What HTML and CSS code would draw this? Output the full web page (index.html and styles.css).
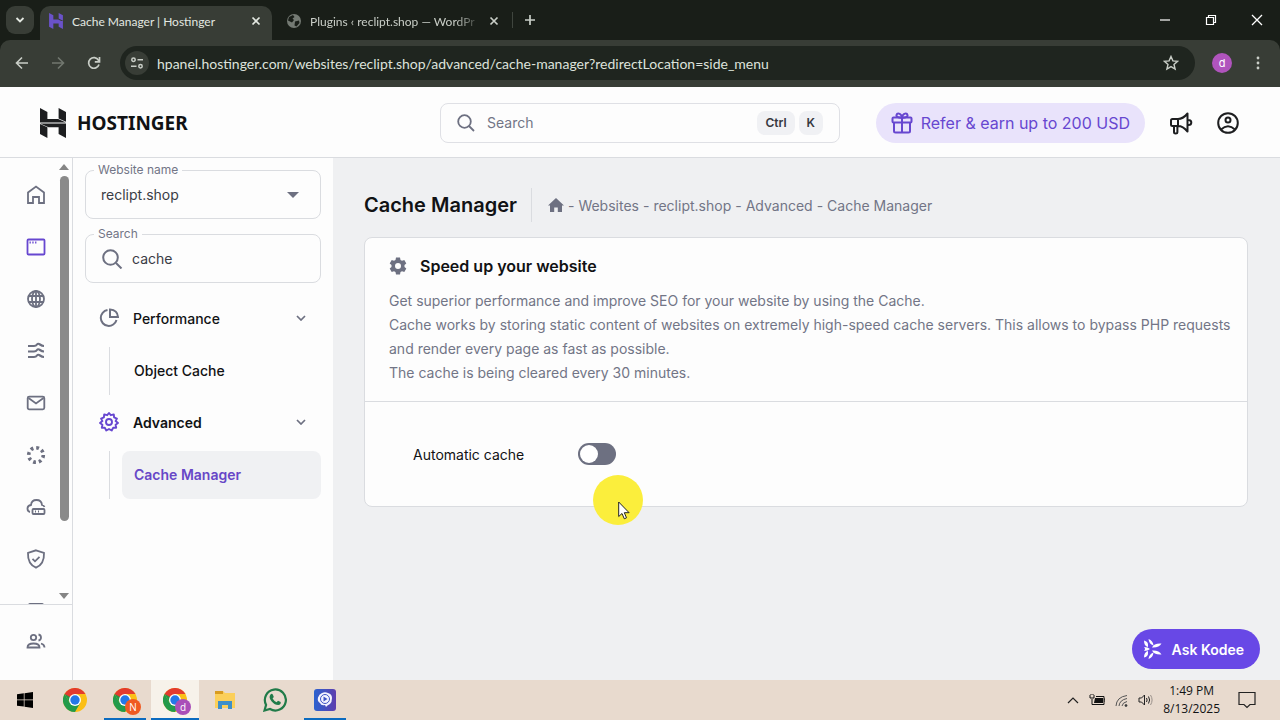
FILE: index.html
```html
<!DOCTYPE html>
<html lang="en">
<head>
  <meta charset="UTF-8" />
  <meta name="viewport" content="width=device-width, initial-scale=1.0" />
  <title>Cache Manager | Hostinger</title>
  <link rel="stylesheet" href="styles.css">
</head>
<body>
  <!-- browser -->
  <div class="tabstrip">
    <button type="button" class="tab-list" aria-label="Search tabs">
      <svg width="10" height="6" viewBox="0 0 10 6"><path d="M1.500 1L5 4.500L8.500 1" fill="none" stroke="#e3e8e1" stroke-width="1.800"/></svg>
    </button>
    <div class="tab active">
      <svg width="16" height="16" viewBox="0 0 26 30" fill="#6a52c8"><path d="M0 0l8 4v8h9l9 4.500H0zM18 0l8 4v10.500l-8-4.200zM0 15h26v15l-8-4v-6.500H8V30l-8-4z"/></svg>
      <span class="tab-title">Cache Manager | Hostinger</span>
      <button type="button" aria-label="Close tab"><svg width="10" height="10" viewBox="0 0 10 10"><path d="M1.500 1.500l7 7M8.500 1.500l-7 7" stroke="#e3e8e1" stroke-width="1.700"/></svg></button>
    </div>
    <div class="tab">
      <svg width="16" height="16" viewBox="0 0 16 16"><circle cx="8" cy="8" r="7" fill="#747a73"/><path d="M3 4l4-2 1.500 2-2 1.500L8 7 6 9.500 2 7.500zM9 8.500l4-1 .5 2.500-3 3.500-2-1z" fill="#191e18"/></svg>
      <span class="tab-title fade">Plugins ‹ reclipt.shop — WordPr</span>
      <button type="button" aria-label="Close tab"><svg width="10" height="10" viewBox="0 0 10 10"><path d="M1.500 1.500l7 7M8.500 1.500l-7 7" stroke="#c9cec7" stroke-width="1.700"/></svg></button>
    </div>
    <button type="button" class="new-tab" aria-label="New tab"><svg width="12" height="12" viewBox="0 0 12 12"><path d="M6 1v10M1 6h10" stroke="#c9cec7" stroke-width="1.700"/></svg></button>
    <div class="window-buttons">
      <button type="button" aria-label="Minimize"><svg width="12" height="12" viewBox="0 0 12 12"><path d="M1 6h10" stroke="#fff" stroke-width="1.200"/></svg></button>
      <button type="button" aria-label="Restore"><svg width="12" height="12" viewBox="0 0 12 12" fill="none" stroke="#fff" stroke-width="1.200"><path d="M1.500 3.500h7v7h-7z"/><path d="M3.500 3.500v-2h7v7h-2"/></svg></button>
      <button type="button" aria-label="Close"><svg width="12" height="12" viewBox="0 0 12 12"><path d="M1 1l10 10M11 1L1 11" stroke="#fff" stroke-width="1.300"/></svg></button>
    </div>
  </div>

  <div class="toolbar-back">
    <div class="toolbar">
      <button type="button" aria-label="Back"><svg width="14" height="14" viewBox="0 0 14 14" fill="none" stroke="#c9cec7" stroke-width="1.600"><path d="M13 7H2M7 1.500L1.500 7 7 12.500"/></svg></button>
      <button type="button" aria-label="Forward" disabled><svg width="14" height="14" viewBox="0 0 14 14" fill="none" stroke="#71776f" stroke-width="1.600"><path d="M1 7h11M7 1.500L12.500 7 7 12.500"/></svg></button>
      <button type="button" aria-label="Reload"><svg width="14" height="14" viewBox="0 0 14 14" fill="none" stroke="#c9cec7" stroke-width="1.700"><path d="M12 8.500A5.300 5.300 0 1 1 11.500 4.200L12.500 5.500"/><path d="M12.500 1v4.800H7.800"/></svg></button>
      <div class="url-bar">
        <span class="site-info"><svg width="14" height="14" viewBox="0 0 14 14" fill="none" stroke="#c9cec7" stroke-width="1.500"><circle cx="3.500" cy="3.700" r="1.700"/><path d="M7.500 3.700H13M1 10.300h5.500"/><circle cx="10.500" cy="10.300" r="1.700"/></svg></span>
        <input type="text" aria-label="Address" value="hpanel.hostinger.com/websites/reclipt.shop/advanced/cache-manager?redirectLocation=side_menu">
        <svg width="16" height="16" viewBox="0 0 16 16"><path d="M8 1.500l1.900 4.400 4.700.4-3.600 3.100 1.100 4.700L8 11.600l-4.100 2.500L5 9.400 1.400 6.300l4.700-.4z" fill="none" stroke="#c9cec7" stroke-width="1.400"/></svg>
      </div>
      <span class="profile">d</span>
      <button type="button" aria-label="Menu"><svg width="4" height="16" viewBox="0 0 4 16" fill="#c9cec7"><circle cx="2" cy="3" r="1.400"/><circle cx="2" cy="8" r="1.400"/><circle cx="2" cy="13" r="1.400"/></svg></button>
    </div>
  </div>

  <!-- hPanel -->
  <header class="topbar">
    <a class="brand" href="#">
      <svg width="26" height="30" viewBox="0 0 26 30" fill="#1d1e20"><path d="M0 0l7.400 4v7h10.800L26 14.400H0zM18.600 0L26 4v9.800l-7.400-3.400zM0 16l7.400 3.300V30L0 26zM0 15.600h26V30l-7.400-4v-6.700H8.500z"/></svg>
      <span>HOSTINGER</span>
    </a>
    <div class="top-search">
      <svg width="18" height="18" viewBox="0 0 18 18" fill="none" stroke="#6d7081" stroke-width="1.800"><circle cx="7.500" cy="7.500" r="6.300"/><path d="M12 12l5 5"/></svg>
      <input type="text" aria-label="Search" placeholder="Search">
      <div class="keys"><kbd>Ctrl</kbd><kbd>K</kbd></div>
    </div>
    <div class="top-actions">
      <a class="refer" href="#">
        <svg width="22" height="22" viewBox="0 0 22 22" fill="none" stroke="#6747d0" stroke-width="2"><rect x="1.500" y="5.500" width="19" height="5" rx="1"/><path d="M3 10.500V19q0 1.500 1.500 1.500h13q1.500 0 1.500-1.500v-8.500M11 5.500v15M11 5.500C8 6 5 5 5.500 3S10 .5 11 5.500C12 .5 16 1 16.500 3S14 6 11 5.500"/></svg>
        Refer &amp; earn up to 200 USD
      </a>
      <button type="button" aria-label="Announcements"><svg width="24" height="24" viewBox="0 0 24 24" fill="none" stroke="#1d1e20" stroke-width="2" stroke-linejoin="round"><path d="M9 8H3.500Q2 8 2 9.500v4Q2 15 3.500 15H9zM9 8q5 0 9.500-5.500v18Q14 15 9 15M5 15v6q0 1.500 1.700 1.500t1.700-1.500v-6M19.500 9q2.800 0 2.800 2.500t-2.800 2.500"/></svg></button>
      <button type="button" aria-label="Account"><svg width="22" height="22" viewBox="0 0 22 22" fill="none" stroke="#1d1e20" stroke-width="2"><circle cx="11" cy="11" r="9.800"/><circle cx="11" cy="8" r="2.500"/><path d="M4 17.500q7-6.500 14 0"/></svg></button>
    </div>
  </header>

  <div class="layout">
    <aside class="rail">
      <div class="rail-scroll">
        <nav>
          <a href="#" aria-label="Home"><svg viewBox="0 0 20 20"><path d="M2 18V7.500L10 1.500l8 6V18h-5v-6H7v6z"/></svg></a>
          <a href="#" aria-label="Websites" class="current"><svg viewBox="0 0 20 20"><rect x="1.500" y="2.500" width="17" height="15" rx="1"/><path d="M3.500 5.500h1.300M6.300 5.500h1.300M9.100 5.500h1.300"/></svg></a>
          <a href="#" aria-label="Domains"><svg viewBox="0 0 20 20"><circle cx="10" cy="10" r="8"/><ellipse cx="10" cy="10" rx="4" ry="8"/><path d="M2 7h16M2 13h16M10 2v16"/></svg></a>
          <a href="#" aria-label="Horizons"><svg viewBox="0 0 20 20"><path stroke-width="2.200" d="M2 5h6q2 0 3-1.500t3 0T18 5M2 10.500h6q2 0 3-1.500t3 0 4 1.500M2 16h6q2 0 3-1.500t3 0 4 1.500"/></svg></a>
          <a href="#" aria-label="Emails"><svg viewBox="0 0 20 20"><rect x="1.700" y="3.700" width="16.600" height="12.600" rx="1.500"/><path d="M2.500 5l7.500 5.500L17.500 5"/></svg></a>
          <a href="#" aria-label="Kodee"><svg viewBox="0 0 20 20"><circle cx="10" cy="10" r="7.300" stroke-width="3.600" stroke-dasharray="2.800 2.933"/></svg></a>
          <a href="#" aria-label="VPS"><svg viewBox="0 0 20 20"><path d="M4 15Q1.500 14.500 1.500 11.500T5 8q.5-5 5.500-5t5.500 5q2 .5 2.500 2"/><rect x="6.500" y="12" width="12" height="5" rx="1"/><path d="M9 14.500h1M12 14.500h1"/></svg></a>
          <a href="#" aria-label="Security"><svg viewBox="0 0 20 20"><path d="M10 1.300l8 2.700q.5 11-8 14.700Q1.500 15 2 4z"/><path d="M6.500 9.800l2.500 2.500 4.500-4.500"/></svg></a>
          <a href="#" aria-label="Billing"><svg viewBox="0 0 20 20"><rect x="3" y="3" width="14" height="14" rx="1"/></svg></a>
        </nav>
        <div class="scrollbar">
          <svg width="10" height="6" viewBox="0 0 10 6"><path d="M0 6l5-6 5 6z" fill="#858585"/></svg>
          <div class="track"><div class="thumb"></div></div>
          <svg width="10" height="6" viewBox="0 0 10 6"><path d="M0 0l5 6 5-6z" fill="#858585"/></svg>
        </div>
      </div>
      <a class="rail-bottom" href="#" aria-label="Account sharing"><svg viewBox="0 0 20 20"><circle cx="7.500" cy="6.500" r="2.700"/><path d="M1.500 16.500q0-4 6-4t6 4zM12.500 3.500q2.500.5 2.500 3t-2.500 3M15 12.500q3.500 1 3.500 4"/></svg></a>
    </aside>

    <aside class="sidebar">
      <div class="field">
        <label for="website">Website name</label>
        <select id="website"><option>reclipt.shop</option></select>
        <svg width="12" height="6" viewBox="0 0 12 6"><path d="M0 0h12L6 6z" fill="#6d7081"/></svg>
      </div>
      <div class="field">
        <label for="menuSearch">Search</label>
        <svg width="22" height="20" viewBox="0 0 22 20" fill="none" stroke="#6d7081" stroke-width="2"><circle cx="9.500" cy="8.500" r="7.300"/><path d="M15 14l5.500 5.500"/></svg>
        <input type="text" id="menuSearch" value="cache">
      </div>
      <nav class="menu">
        <button type="button" class="menu-group">
          <svg width="20" height="20" viewBox="0 0 20 20" fill="none" stroke="#6d7081" stroke-width="2"><path d="M8.500 2A8 8 0 1 0 17.500 12"/><path d="M11 1.500V9H19Q18.500 2 11 1.500z"/></svg>
          <span>Performance</span>
          <svg width="10" height="6" viewBox="0 0 10 6"><path d="M1 1l4 4 4-4" fill="none" stroke="#6d7081" stroke-width="1.700"/></svg>
        </button>
        <div class="submenu"><a href="#">Object Cache</a></div>
        <button type="button" class="menu-group open">
          <svg width="20" height="20" viewBox="0 0 20 20" fill="none" stroke="#6747d0" stroke-width="1.900" stroke-linejoin="round"><path d="M8.200 3.200L10 1l1.800 2.200 3-.8.300 3 2.800 1.200-1.300 2.500L19 11l-2.400 1.700.6 3-3 .1-1.500 2.700L10 17l-2.700 1.500-1.500-2.700-3-.1.600-3L1 11l2.400-1.900-1.300-2.500 2.800-1.200.3-3z"/><circle cx="10" cy="10" r="3"/></svg>
          <span>Advanced</span>
          <svg width="10" height="6" viewBox="0 0 10 6"><path d="M1 1l4 4 4-4" fill="none" stroke="#6d7081" stroke-width="1.700"/></svg>
        </button>
        <div class="submenu"><a href="#" class="selected">Cache Manager</a></div>
      </nav>
    </aside>

    <main>
      <div class="page-head">
        <h1>Cache Manager</h1>
        <nav class="breadcrumb">
          <a href="#" aria-label="Home"><svg width="16" height="14" viewBox="0 0 16 14"><path d="M8 0l8 7.500h-2V14H9.800V9.500H6.200V14H2V7.500H0z" fill="#6d7081"/></svg></a>
          <span>-</span> <a href="#">Websites</a> <span>-</span> <a href="#">reclipt.shop</a> <span>-</span> <a href="#">Advanced</a> <span>-</span> <span>Cache Manager</span>
        </nav>
      </div>

      <section class="card">
        <div class="card-info">
          <h2>
            <svg width="18" height="18" viewBox="0 0 18 18" fill="#6d7081" fill-rule="evenodd"><path d="M7 .5h4l.5 2.400 1.500.9 2.300-.8 2 3.500L15.500 8v2l1.800 1.500-2 3.500-2.300-.8-1.500.9-.5 2.400H7l-.5-2.400-1.500-.9-2.300.8-2-3.500L2.500 10V8L.7 6.500l2-3.500 2.300.8 1.500-.9zM9 6a3 3 0 1 0 0 6 3 3 0 0 0 0-6z"/></svg>
            Speed up your website
          </h2>
          <p>Get superior performance and improve SEO for your website by using the Cache.</p>
          <p>Cache works by storing static content of websites on extremely high-speed cache servers. This allows to bypass PHP requests and render every page as fast as possible.</p>
          <p>The cache is being cleared every 30 minutes.</p>
        </div>
        <div class="card-option">
          <label for="autoCache">Automatic cache</label>
          <input type="checkbox" role="switch" id="autoCache" class="toggle">
        </div>
        <div class="pointer">
          <svg width="12" height="19" viewBox="0 0 12 19"><path d="M.7 1v14.500l3.300-3 2.300 5.300 2.200-1L6.300 11.700h4.800z" fill="#fff" stroke="#222"/></svg>
        </div>
      </section>

      <button type="button" class="kodee">
        <svg width="20" height="20" viewBox="0 0 20 20" fill="#fff"><path d="M1 1.500q4 1 4 4V8Q1 7 1 1.500zM1 18.500q4-1 4-4V12q-4 1-4 6.500zM5.500 0Q10 1.500 10.500 6.500 6 5 5.500 0zM5.500 20q4.500-1.500 5-6.500-4.500 1.500-5 6.500zM9 8.500Q11 4 18.500 4.500 16 9 9 8.500zM9 11.500q2 4.500 9.500 4-2.500-4.500-9.500-4zM1 8q4 0 6 2-2 2-6 2 2-2 0-4z"/></svg>
        Ask Kodee
      </button>
    </main>
  </div>

  <!-- taskbar -->
  <footer class="taskbar">
    <button type="button" aria-label="Start"><svg width="16" height="16" viewBox="0 0 16 16"><path d="M0 2.200l6.800-.9v6.300H0zM7.500 1.200L16 0v7.600H7.500zM0 8.300h6.800v6.300L0 13.700zM7.500 8.300H16V16l-8.500-1.200z"/></svg></button>
    <button type="button" aria-label="Chrome">
      <svg width="24" height="24" viewBox="0 0 24 24"><g id="chrome"><circle cx="12" cy="12" r="12" fill="#fbbf16"/><path d="M1.600 6A12 12 0 0 1 22.400 6H12z" fill="#e33b2e"/><path d="M1.600 6A12 12 0 0 0 12 24l5.200-9-10.400 0z" fill="#229a4b"/><path d="M1.600 6L12 6 6.800 15z" fill="#229a4b"/><path d="M1.600 6H12L7 9z" fill="#e33b2e"/><circle cx="12" cy="12" r="6" fill="#fff"/><circle cx="12" cy="12" r="4.700" fill="#2377e8"/></g></svg>
    </button>
    <button type="button" aria-label="Chrome, profile N" class="running">
      <svg width="24" height="24" viewBox="0 0 24 24"><use href="#chrome"/></svg>
      <span class="badge orange">N</span>
    </button>
    <button type="button" aria-label="Chrome, profile d" class="running focused">
      <svg width="24" height="24" viewBox="0 0 24 24"><use href="#chrome"/></svg>
      <span class="badge purple">d</span>
    </button>
    <button type="button" aria-label="File Explorer"><svg width="22" height="20" viewBox="0 0 22 20"><path d="M1 1h8l2 2h10v15H1z" fill="#fbcf5a"/><path d="M1 1h8v3H1z" fill="#d89b20"/><path d="M4 19v-8h14v8h-4v-4H8v4z" fill="#3d8fca"/></svg></button>
    <button type="button" aria-label="WhatsApp"><svg width="24" height="24" viewBox="0 0 24 24"><path d="M1.500 22.500l1.600-5.600A10.500 10.500 0 1 1 7 21z" fill="none" stroke="#207b49" stroke-width="2.200"/><path d="M7.500 6.500q1.500-1.500 2.500.5l.8 2-1.200 1.500q1.500 2.700 4 3.700l1.400-1.500 2.700 1.300q.5 2.500-2.500 3-3.500 0-6.500-3.500-3.500-4-1.200-7z" fill="#207b49"/></svg></button>
    <button type="button" aria-label="Recorder" class="running"><svg width="22" height="22" viewBox="0 0 22 22"><defs><linearGradient id="rec"><stop offset="0" stop-color="#2b62cf"/><stop offset="1" stop-color="#5e3eae"/></linearGradient></defs><rect width="22" height="22" rx="3" fill="url(#rec)"/><path d="M8 4q3-1.500 6 0 4 1 4 5t-2 6q-3 1.500-4 3l-1-2q-4 1-5-2-3-2-2-5.500T8 4z" fill="#f4f4ff"/><circle cx="11" cy="10" r="4.500" fill="none" stroke="#3f55c5"/><path d="M9.500 7.500l4 2.500-4 2.500z" fill="#3f55c5"/></svg></button>

    <div class="tray">
      <svg width="12" height="8" viewBox="0 0 12 8"><path d="M1 7l5-5 5 5" fill="none" stroke="#222" stroke-width="1.200"/></svg>
      <svg width="16" height="12" viewBox="0 0 16 12"><path d="M6 4h8v5H5z" fill="#111"/><path d="M3 5v5.500h12V2.500H7M15 5h1v3M1 1v3h4V1M2 0v1M4 0v1" fill="none" stroke="#111"/></svg>
      <svg width="13" height="13" viewBox="0 0 13 13" fill="none" stroke="#555"><path d="M1 12Q1.500 3 12 1.500M4 12q.5-6 8-7.500M7 12q.5-3.500 5-4.500"/><circle cx="11" cy="11.500" r="1" fill="#111"/></svg>
      <svg width="15" height="12" viewBox="0 0 15 12" fill="none" stroke="#222"><path d="M1 4h2.500L6.500 1v10l-3-3H1zM8.500 4q1.200 2 0 4M10.500 2.500q2.200 3.500 0 7"/><path d="M12.500 1q3.200 5 0 10" stroke="#9a918b"/></svg>
      <div class="clock"><span>1:49 PM</span><span>8/13/2025</span></div>
      <svg width="18" height="18" viewBox="0 0 18 18"><path d="M1 1.500h16v12h-5l-3 3-3-3H1z" fill="none" stroke="#222" stroke-width="1.200"/></svg>
    </div>
  </footer>
</body>
</html>
```

FILE: styles.css
```css
* {
  box-sizing: border-box;
}
body {
  margin: 0;
  height: 100vh;
  display: flex;
  flex-direction: column;
  font-family: Inter, sans-serif;
  font-size: 14px;
  color: #111214;
  background: #fdfdfd;
  overflow: hidden;
}
a {
  color: inherit;
  text-decoration: none;
}
button {
  display: flex;
  align-items: center;
  justify-content: center;
  padding: 0;
  border: none;
  background: none;
  font: inherit;
  color: inherit;
  cursor: pointer;
}
input, select {
  font: inherit;
  color: inherit;
  border: none;
  outline: none;
  background: none;
  padding: 0;
  min-width: 0;
}
svg {
  flex-shrink: 0;
  display: block;
}

/* browser window */
.tabstrip {
  display: flex;
  align-items: center;
  height: 40px;
  padding-left: 6px;
  background: #191e18;
  color: #c9cec7;
  font-family: Lato, sans-serif;
  font-size: 12px;
  flex-shrink: 0;
}
.tab-list {
  width: 28px;
  height: 28px;
  margin-right: 6px;
  border-radius: 9px;
  background: #383d36;
}
.tab {
  display: flex;
  align-items: center;
  gap: 8px;
  width: 240px;
  height: 34px;
  padding: 0 13px 4px 14px;
  align-self: flex-end;
}
.tab.active {
  width: 232px;
  padding: 0 11px 4px 8px;
  border-radius: 10px 10px 0 0;
  background: #383d36;
  color: #e3e8e1;
}
.tab-title {
  flex: 1;
  overflow: hidden;
  white-space: nowrap;
}
.fade {
  mask-image: linear-gradient(to right, #000 85%, transparent);
}
.new-tab {
  height: 16px;
  padding-left: 11px;
  border-left: 1px solid #3f453e;
}
.window-buttons {
  display: flex;
  gap: 34px;
  margin-left: auto;
  padding-right: 17px;
}
.toolbar-back {
  background: #191e18;
  flex-shrink: 0;
}
.toolbar {
  display: flex;
  align-items: center;
  height: 47px;
  padding: 0 20px 1px 15px;
  border-radius: 10px 10px 0 0;
  background: #383d36;
}
.toolbar > button {
  width: 14px;
  margin-right: 22px;
}
.toolbar > button:last-child {
  width: 4px;
  margin: 0;
}
.url-bar {
  flex: 1;
  display: flex;
  align-items: center;
  gap: 8px;
  height: 34px;
  margin-left: -3px;
  padding: 0 16px 0 5px;
  border-radius: 17px;
  background: #1f251f;
  color: #dde2db;
  font-family: Lato, sans-serif;
}
.url-bar input {
  flex: 1;
}
.site-info {
  display: flex;
  align-items: center;
  justify-content: center;
  width: 24px;
  height: 24px;
  border-radius: 50%;
  background: #383d36;
}
.profile {
  width: 20px;
  margin: 0 24px 0 17px;
  border-radius: 50%;
  background: #b054bd;
  color: #fff;
  font-size: 11px;
  line-height: 20px;
  text-align: center;
}

/* top bar */
.topbar {
  display: grid;
  grid-template-columns: 1fr 400px 1fr;
  align-items: center;
  height: 71px;
  padding: 1px 40px 0;
  border-bottom: 1px solid #dadce0;
  flex-shrink: 0;
}
.brand {
  display: flex;
  align-items: center;
  gap: 11px;
  font-family: "Noto Sans", sans-serif;
  font-size: 19px;
  font-weight: 700;
}
.top-search {
  display: flex;
  align-items: center;
  gap: 8px;
  height: 40px;
  padding: 0 16px;
  border: 1px solid #dfe0e5;
  border-radius: 8px;
}
.top-search input {
  flex: 1;
  margin-left: 4px;
}
.top-search input::placeholder {
  color: #727586;
}
.keys {
  display: flex;
  gap: 4px;
}
.keys kbd {
  padding: 0 8px;
  border-radius: 8px;
  background: #f0f1f4;
  color: #36383f;
  font-family: inherit;
  font-size: 12px;
  font-weight: 600;
  line-height: 24px;
}
.top-actions {
  display: flex;
  align-items: center;
  justify-content: flex-end;
  gap: 24px;
  padding-right: 1px;
}
.refer {
  display: flex;
  align-items: center;
  gap: 8px;
  height: 40px;
  padding: 0 15px;
  border-radius: 20px;
  background: #e9e3fb;
  color: #6747d0;
  font-size: 16px;
  white-space: nowrap;
}

/* left rail */
.layout {
  flex: 1;
  display: flex;
  min-height: 0;
}
.rail {
  display: flex;
  flex-direction: column;
  width: 73px;
  border-right: 1px solid #dadce0;
  flex-shrink: 0;
}
.rail-scroll {
  flex: 1;
  display: flex;
  min-height: 0;
  overflow: hidden;
}
.rail nav {
  width: 58px;
  padding: 11px 0 0 14px;
}
.rail a {
  display: flex;
  align-items: center;
  justify-content: center;
  height: 52px;
}
.rail a svg {
  width: 20px;
  height: 20px;
  fill: none;
  stroke: #6d7081;
  stroke-width: 1.8;
}
.rail .current svg {
  width: 22px;
  height: 20px;
  stroke: #6747d0;
}
.scrollbar {
  display: flex;
  flex-direction: column;
  align-items: center;
  width: 12px;
  padding: 6px 0 5px;
}
.track {
  flex: 1;
  padding: 6px 0;
}
.thumb {
  width: 9px;
  height: 84%;
  border-radius: 5px;
  background: #8a8a8a;
}
.rail .rail-bottom {
  height: 76px;
  padding-bottom: 4px;
  border-top: 1px solid #dadce0;
}

/* sidebar */
.sidebar {
  width: 260px;
  padding: 12px 12px 0;
  flex-shrink: 0;
}
.field {
  position: relative;
  display: flex;
  align-items: center;
  gap: 9px;
  height: 49px;
  margin-bottom: 15px;
  padding: 0 21px 0 15px;
  border: 1px solid #dadce0;
  border-radius: 8px;
  color: #3a3c45;
}
.field label {
  position: absolute;
  top: -8px;
  left: 8px;
  padding: 0 4px;
  background: #fdfdfd;
  color: #727586;
  font-size: 12px;
  line-height: 14px;
}
.field select {
  flex: 1;
  appearance: none;
}
.field input {
  flex: 1;
}
.menu-group {
  width: 100%;
  height: 48px;
  margin: 3px 0 5px;
  padding: 0 15px 0 14px;
  gap: 14px;
  font-weight: 500;
  text-align: left;
}
.menu-group span {
  flex: 1;
}
.menu-group.open {
  font-weight: 600;
}
.menu-group:first-child {
  margin-top: -4px;
}
.submenu {
  margin-left: 24px;
  padding-left: 12px;
  border-left: 1px solid #dadce0;
}
.submenu a {
  display: block;
  padding-left: 12px;
  border-radius: 8px;
  font-weight: 500;
  line-height: 48px;
}
.submenu .selected {
  background: #f0f1f3;
  color: #6747c7;
  font-weight: 600;
}

/* page */
main {
  position: relative;
  flex: 1;
  padding: 30px 32px 0 31px;
  background: #eff0f2;
}
.page-head {
  display: flex;
  align-items: center;
  height: 34px;
  margin-bottom: 15px;
}
h1 {
  margin: 0;
  padding-right: 14px;
  border-right: 1px solid #dadce0;
  font-size: 20px;
  font-weight: 600;
  line-height: 34px;
}
.breadcrumb {
  display: flex;
  align-items: center;
  gap: 4px;
  padding-left: 16px;
  color: #727586;
}
.card {
  position: relative;
  border: 1px solid #dadce0;
  border-radius: 8px;
  background: #fdfdfd;
}
.card-info {
  padding: 16px 16px 16px 24px;
  border-bottom: 1px solid #dadce0;
}
h2 {
  display: flex;
  align-items: center;
  gap: 13px;
  margin: 0 0 11px;
  font-size: 16px;
  font-weight: 600;
  line-height: 24px;
}
.card-info p {
  margin: 0;
  color: #727586;
  line-height: 24px;
}
.card-option {
  display: flex;
  align-items: center;
  gap: 54px;
  height: 104px;
  padding: 0 48px;
}
.toggle {
  appearance: none;
  display: flex;
  align-items: center;
  width: 38px;
  height: 22px;
  margin: 0;
  padding: 0 2px;
  border-radius: 11px;
  background: #6d7081;
  cursor: pointer;
}
.toggle::before {
  content: "";
  width: 18px;
  height: 18px;
  border-radius: 50%;
  background: #fff;
}
.toggle:checked {
  justify-content: flex-end;
  background: #673de6;
}
.pointer {
  position: absolute;
  left: 228px;
  top: 237px;
  width: 50px;
  height: 50px;
  padding: 26px 0 0 25px;
  border-radius: 50%;
  background: #fbee3c;
}
.kodee {
  position: absolute;
  right: 20px;
  bottom: 11px;
  gap: 9px;
  height: 40px;
  padding: 0 16px 0 11px;
  border-radius: 20px;
  background: #6848e6;
  color: #fff;
  font-weight: 600;
}

/* taskbar */
.taskbar {
  display: flex;
  height: 40px;
  background: #e8dace;
  font-family: "Open Sans", sans-serif;
  font-size: 12px;
  flex-shrink: 0;
}
.taskbar button {
  position: relative;
  width: 50px;
}
.taskbar .running {
  width: 42px;
  margin: 0 4px;
  box-shadow: inset 0 -2px #0b6bc0;
}
.taskbar .focused {
  width: 48px;
  margin: 0 1px;
  background: #f7f2ea;
}
.badge {
  position: absolute;
  left: 50%;
  bottom: 5px;
  width: 16px;
  border-radius: 50%;
  color: #fff;
  font-size: 10px;
  line-height: 16px;
}
.orange {
  background: #f05a22;
}
.purple {
  background: #a94fb8;
}
.tray {
  display: flex;
  align-items: center;
  gap: 10px;
  margin-left: auto;
  padding-right: 24px;
}
.clock {
  display: flex;
  flex-direction: column;
  text-align: center;
  line-height: 18px;
}
.clock + svg {
  margin-left: 8px;
}
```
